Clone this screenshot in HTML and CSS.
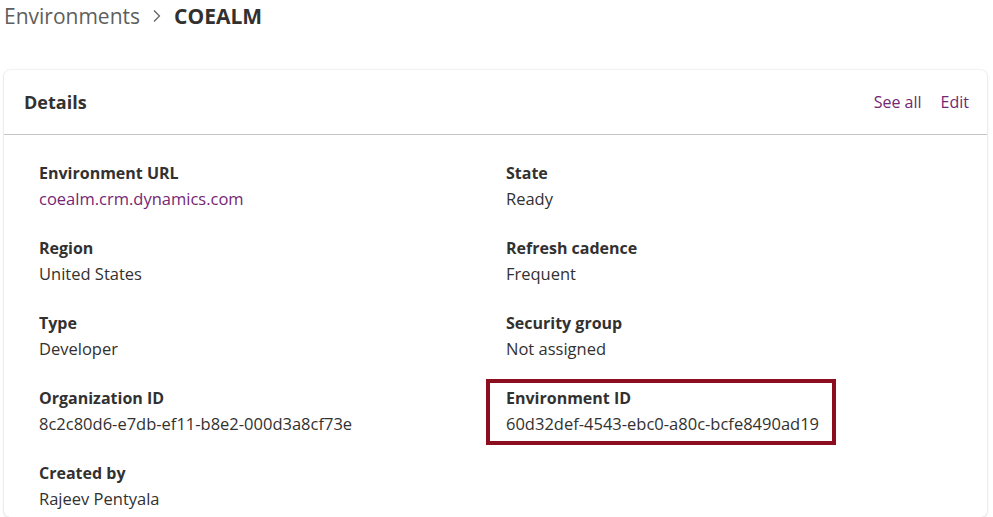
FILE: index.html
```html
<!DOCTYPE html>
<html>
<head>
<meta charset="utf-8">
<link rel="stylesheet" href="styles.css">
</head>
<body>
<div class="crumbs">
  <span class="crumb">Environments</span>
  <svg class="chev" width="10" height="14" viewBox="0 0 10 14"><path d="M2 1.5 L7.5 7 L2 12.5" fill="none" stroke="#605e5c" stroke-width="1.2"/></svg>
  <span class="crumb-current">COEALM</span>
</div>
<div class="card">
  <div class="card-head">
    <span class="title">Details</span>
    <div class="actions">
      <a class="link">See all</a>
      <a class="link">Edit</a>
    </div>
  </div>
  <div class="grid">
    <div class="cell"><div class="label">Environment URL</div><div class="value link">coealm.crm.dynamics.com</div></div>
    <div class="cell"><div class="label">State</div><div class="value">Ready</div></div>
    <div class="cell"><div class="label">Region</div><div class="value">United States</div></div>
    <div class="cell"><div class="label">Refresh cadence</div><div class="value">Frequent</div></div>
    <div class="cell"><div class="label">Type</div><div class="value">Developer</div></div>
    <div class="cell"><div class="label">Security group</div><div class="value">Not assigned</div></div>
    <div class="cell"><div class="label">Organization ID</div><div class="value">8c2c80d6-e7db-ef11-b8e2-000d3a8cf73e</div></div>
    <div class="cell highlight"><div class="label">Environment ID</div><div class="value">60d32def-4543-ebc0-a80c-bcfe8490ad19</div></div>
    <div class="cell"><div class="label">Created by</div><div class="value">Rajeev Pentyala</div></div>
  </div>
</div>
</body>
</html>
```

FILE: styles.css
```css
html, body {
  margin: 0;
  padding: 0;
  background: #ffffff;
  font-family: "Open Sans", "Noto Sans", sans-serif;
  color: #323130;
  overflow: hidden;
}
.crumbs {
  display: flex;
  align-items: center;
  height: 32px;
  padding-left: 4px;
  gap: 10px;
}
.crumb {
  font-size: 21px;
  color: #605e5c;
}
.chev { margin: 0 2px; }
.crumb-current {
  font-size: 21px;
  font-weight: 700;
  color: #323130;
}
.card {
  margin: 38px 6px 0 4px;
  border-radius: 6px;
  background: #fff;
  box-shadow: 0 0 2px rgba(0,0,0,0.14), 0 1px 3px rgba(0,0,0,0.10);
  height: 447px;
}
.card-head {
  height: 64px;
  display: flex;
  align-items: center;
  justify-content: space-between;
  padding: 0 18px 0 20px;
  border-bottom: 1px solid #c8c6c4;
}
.title {
  font-size: 18px;
  font-weight: 700;
}
.actions {
  display: flex;
  gap: 19px;
}
.link {
  color: #742774;
  font-size: 16px;
}
.grid {
  display: grid;
  grid-template-columns: 467px 1fr;
  row-gap: 25px;
  padding: 26px 0 0 35px;
}
.cell {
  position: relative;
}
.label {
  font-size: 16px;
  font-weight: 700;
  line-height: 25px;
}
.value {
  font-size: 16.5px;
  line-height: 25px;
}
.highlight::after {
  content: "";
  position: absolute;
  left: -20px;
  top: -7px;
  width: 350px;
  height: 66px;
  box-sizing: border-box;
  border: 4px solid #8b0d1e;
}
```
